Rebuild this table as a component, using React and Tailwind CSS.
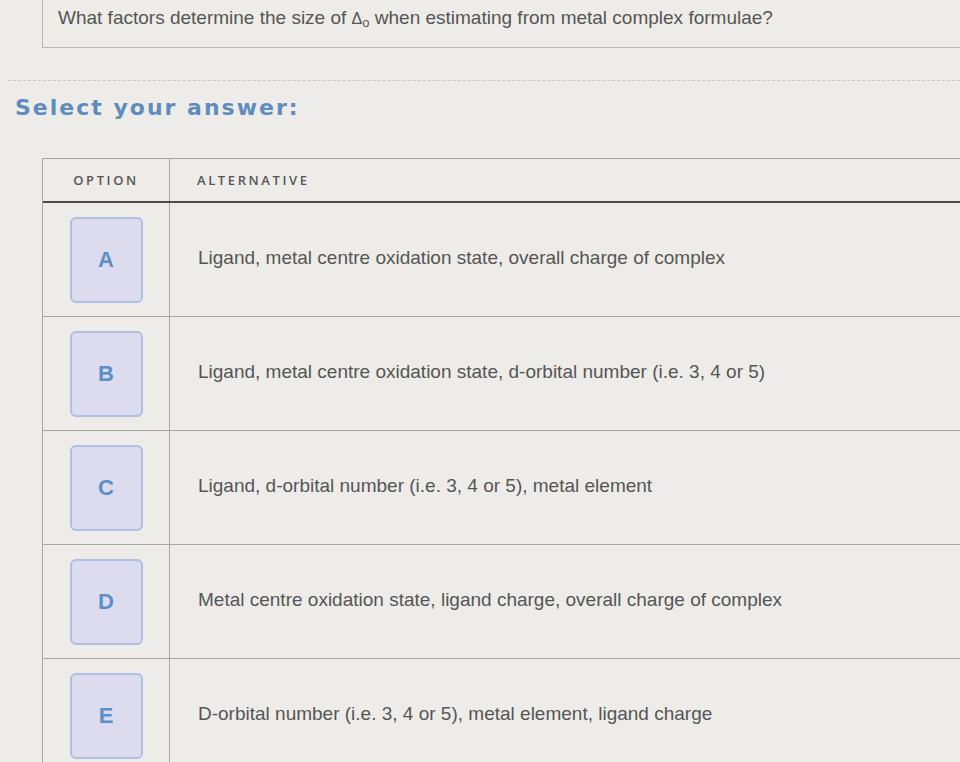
export default function App() {
  const rows = [
    ["A", "Ligand, metal centre oxidation state, overall charge of complex"],
    ["B", "Ligand, metal centre oxidation state, d-orbital number (i.e. 3, 4 or 5)"],
    ["C", "Ligand, d-orbital number (i.e. 3, 4 or 5), metal element"],
    ["D", "Metal centre oxidation state, ligand charge, overall charge of complex"],
    ["E", "D-orbital number (i.e. 3, 4 or 5), metal element, ligand charge"],
  ];
  return (
    <div className="w-[960px] h-[762px] overflow-hidden bg-[#eeece9] font-['Liberation_Sans',Arial,sans-serif]">
      <div className="ml-[42px] border-l border-b border-[#b9b7b4] pl-[15px] pt-[6px] pb-[16px] w-[960px]">
        <p className="text-[19px] leading-[24px] text-[#555]">
          What factors determine the size of <span className="text-[16px]">Δ</span><sub className="text-[13px]">o</sub> when estimating from metal complex formulae?
        </p>
      </div>
      <div className="mt-[32px] ml-[8px] border-t border-dashed border-[#c9c7c4]" />
      <h2 className="mt-[14px] ml-[15px] h-[26px] leading-[26px] text-[22px] font-bold tracking-[2px] text-[#5f8cbc] font-['DejaVu_Sans',Verdana,sans-serif]">
        Select your answer:
      </h2>
      <div className="mt-[37px] ml-[42px] w-[960px] border-t border-l border-[#a9a7a4]">
        <div className="flex h-[44px] border-b-2 border-[#4a4a4a]">
          <div className="w-[127px] shrink-0 border-r border-[#a9a7a4] flex items-center justify-center pt-[2px] text-[13px] font-semibold tracking-[2.6px] text-[#555] font-['Open_Sans',sans-serif]">
            OPTION
          </div>
          <div className="flex-1 flex items-center pl-[27px] pt-[2px] text-[13px] font-semibold tracking-[2.6px] text-[#555] font-['Open_Sans',sans-serif]">
            ALTERNATIVE
          </div>
        </div>
        {rows.map(([k, t]) => (
          <div key={k} className="flex h-[114px] border-b border-[#a9a7a4]">
            <div className="w-[127px] shrink-0 border-r border-[#a9a7a4] flex items-center justify-center">
              <div className="w-[73px] h-[86px] rounded-[6px] border-2 border-[#aec0e6] bg-[#dddcee] flex items-center justify-center text-[22px] font-bold text-[#5b8fcb]">
                {k}
              </div>
            </div>
            <div className="flex-1 flex items-center pl-[28px] pb-[2px] text-[19px] text-[#555]">
              {t}
            </div>
          </div>
        ))}
      </div>
    </div>
  );
}
